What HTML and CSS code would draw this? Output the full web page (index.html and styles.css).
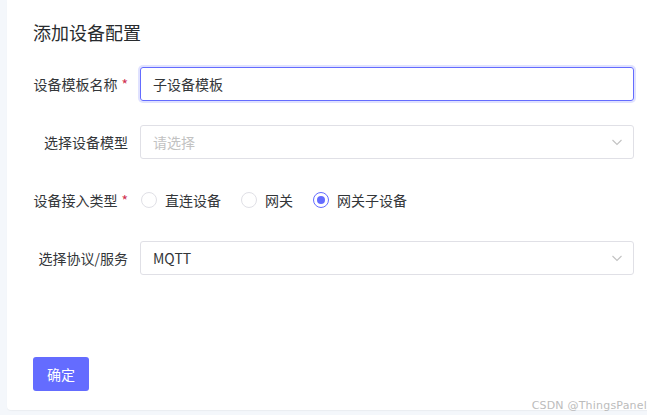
FILE: index.html
```html
<!DOCTYPE html>
<html lang="zh-CN">
<head>
<meta charset="utf-8">
<title>添加设备配置</title>
<link rel="stylesheet" href="styles.css">
</head>
<body>
<div class="card">
  <h2 class="title">添加设备配置</h2>
  <form class="form">
    <div class="item">
      <label class="label">设备模板名称<span class="req">*</span></label>
      <div class="control">
        <div class="input focused"><span class="value">子设备模板</span></div>
      </div>
    </div>
    <div class="item">
      <label class="label">选择设备模型</label>
      <div class="control">
        <div class="input select"><span class="placeholder">请选择</span>
          <svg class="arrow" viewBox="0 0 12 12" width="12" height="12"><path d="M1.5 4 L6 8.5 L10.5 4" fill="none" stroke="#c2c2c2" stroke-width="1.1"/></svg>
        </div>
      </div>
    </div>
    <div class="item">
      <label class="label">设备接入类型<span class="req">*</span></label>
      <div class="control radios">
        <span class="radio"><span class="dot"></span>直连设备</span>
        <span class="radio"><span class="dot"></span>网关</span>
        <span class="radio checked"><span class="dot"></span>网关子设备</span>
      </div>
    </div>
    <div class="item">
      <label class="label">选择协议/服务</label>
      <div class="control">
        <div class="input select"><span class="value">MQTT</span>
          <svg class="arrow" viewBox="0 0 12 12" width="12" height="12"><path d="M1.5 4 L6 8.5 L10.5 4" fill="none" stroke="#c2c2c2" stroke-width="1.1"/></svg>
        </div>
      </div>
    </div>
    <div class="actions">
      <button type="button" class="btn">确定</button>
    </div>
  </form>
  <div class="watermark">CSDN @ThingsPanel</div>
</div>
</body>
</html>
```

FILE: styles.css
```css
html, body {
  margin: 0;
  padding: 0;
}
body {
  background: #f4f7fb;
  width: 647px;
  height: 415px;
  overflow: hidden;
  font-family: "Noto Sans CJK SC", "Noto Sans", sans-serif;
  color: rgb(51, 54, 57);
  font-size: 14px;
}
.card {
  position: relative;
  box-sizing: border-box;
  margin-left: 7px;
  width: 648px;
  height: 410px;
  background: #fff;
  border-radius: 0 0 0 4px;
  box-shadow: 0 1px 1px rgba(0, 0, 0, 0.04);
  padding: 20px 21px 0 26px;
}
.title {
  margin: 0;
  font-size: 18px;
  font-weight: 400;
  line-height: 24px;
  color: rgb(40, 43, 46);
}
.form {
  margin-top: 23px;
  display: flex;
  flex-direction: column;
}
.item {
  display: flex;
  height: 58px;
}
.label {
  box-sizing: border-box;
  width: 107px;
  flex: none;
  height: 34px;
  line-height: 34px;
  text-align: right;
  padding-right: 12px;
  white-space: nowrap;
}
.req {
  color: #d03050;
  margin-left: 4px;
}
.control {
  flex: 1;
  min-width: 0;
}
.input {
  box-sizing: border-box;
  height: 34px;
  border: 1px solid #e0e0e6;
  border-radius: 3px;
  padding: 0 12px;
  display: flex;
  align-items: center;
  justify-content: space-between;
}
.input.focused {
  border-color: #646cff;
  box-shadow: 0 0 0 2px rgba(100, 108, 255, 0.2);
}
.value {
  color: rgb(51, 54, 57);
}
.placeholder {
  color: #c2c2c2;
}
.arrow {
  margin-right: -2px;
}
.radios {
  display: flex;
  align-items: center;
  height: 34px;
  gap: 20px;
  padding-left: 1px;
}
.radio {
  display: flex;
  align-items: center;
  gap: 8px;
}
.dot {
  box-sizing: border-box;
  width: 16px;
  height: 16px;
  border-radius: 50%;
  border: 1px solid #e0e0e6;
  position: relative;
}
.radio.checked .dot {
  border-color: #646cff;
}
.radio.checked .dot::after {
  content: "";
  position: absolute;
  left: 3px;
  top: 3px;
  width: 8px;
  height: 8px;
  border-radius: 50%;
  background: #646cff;
}
.actions {
  margin-top: 58px;
}
.btn {
  width: 56px;
  height: 34px;
  border: 0;
  border-radius: 3px;
  background: #646cff;
  color: #fff;
  font-family: inherit;
  font-size: 14px;
  padding: 0;
}
.watermark {
  position: absolute;
  right: 8px;
  bottom: -2px;
  font-family: "DejaVu Sans", sans-serif;
  font-size: 11px;
  color: #bcbcbc;
  letter-spacing: 0.2px;
}
```
